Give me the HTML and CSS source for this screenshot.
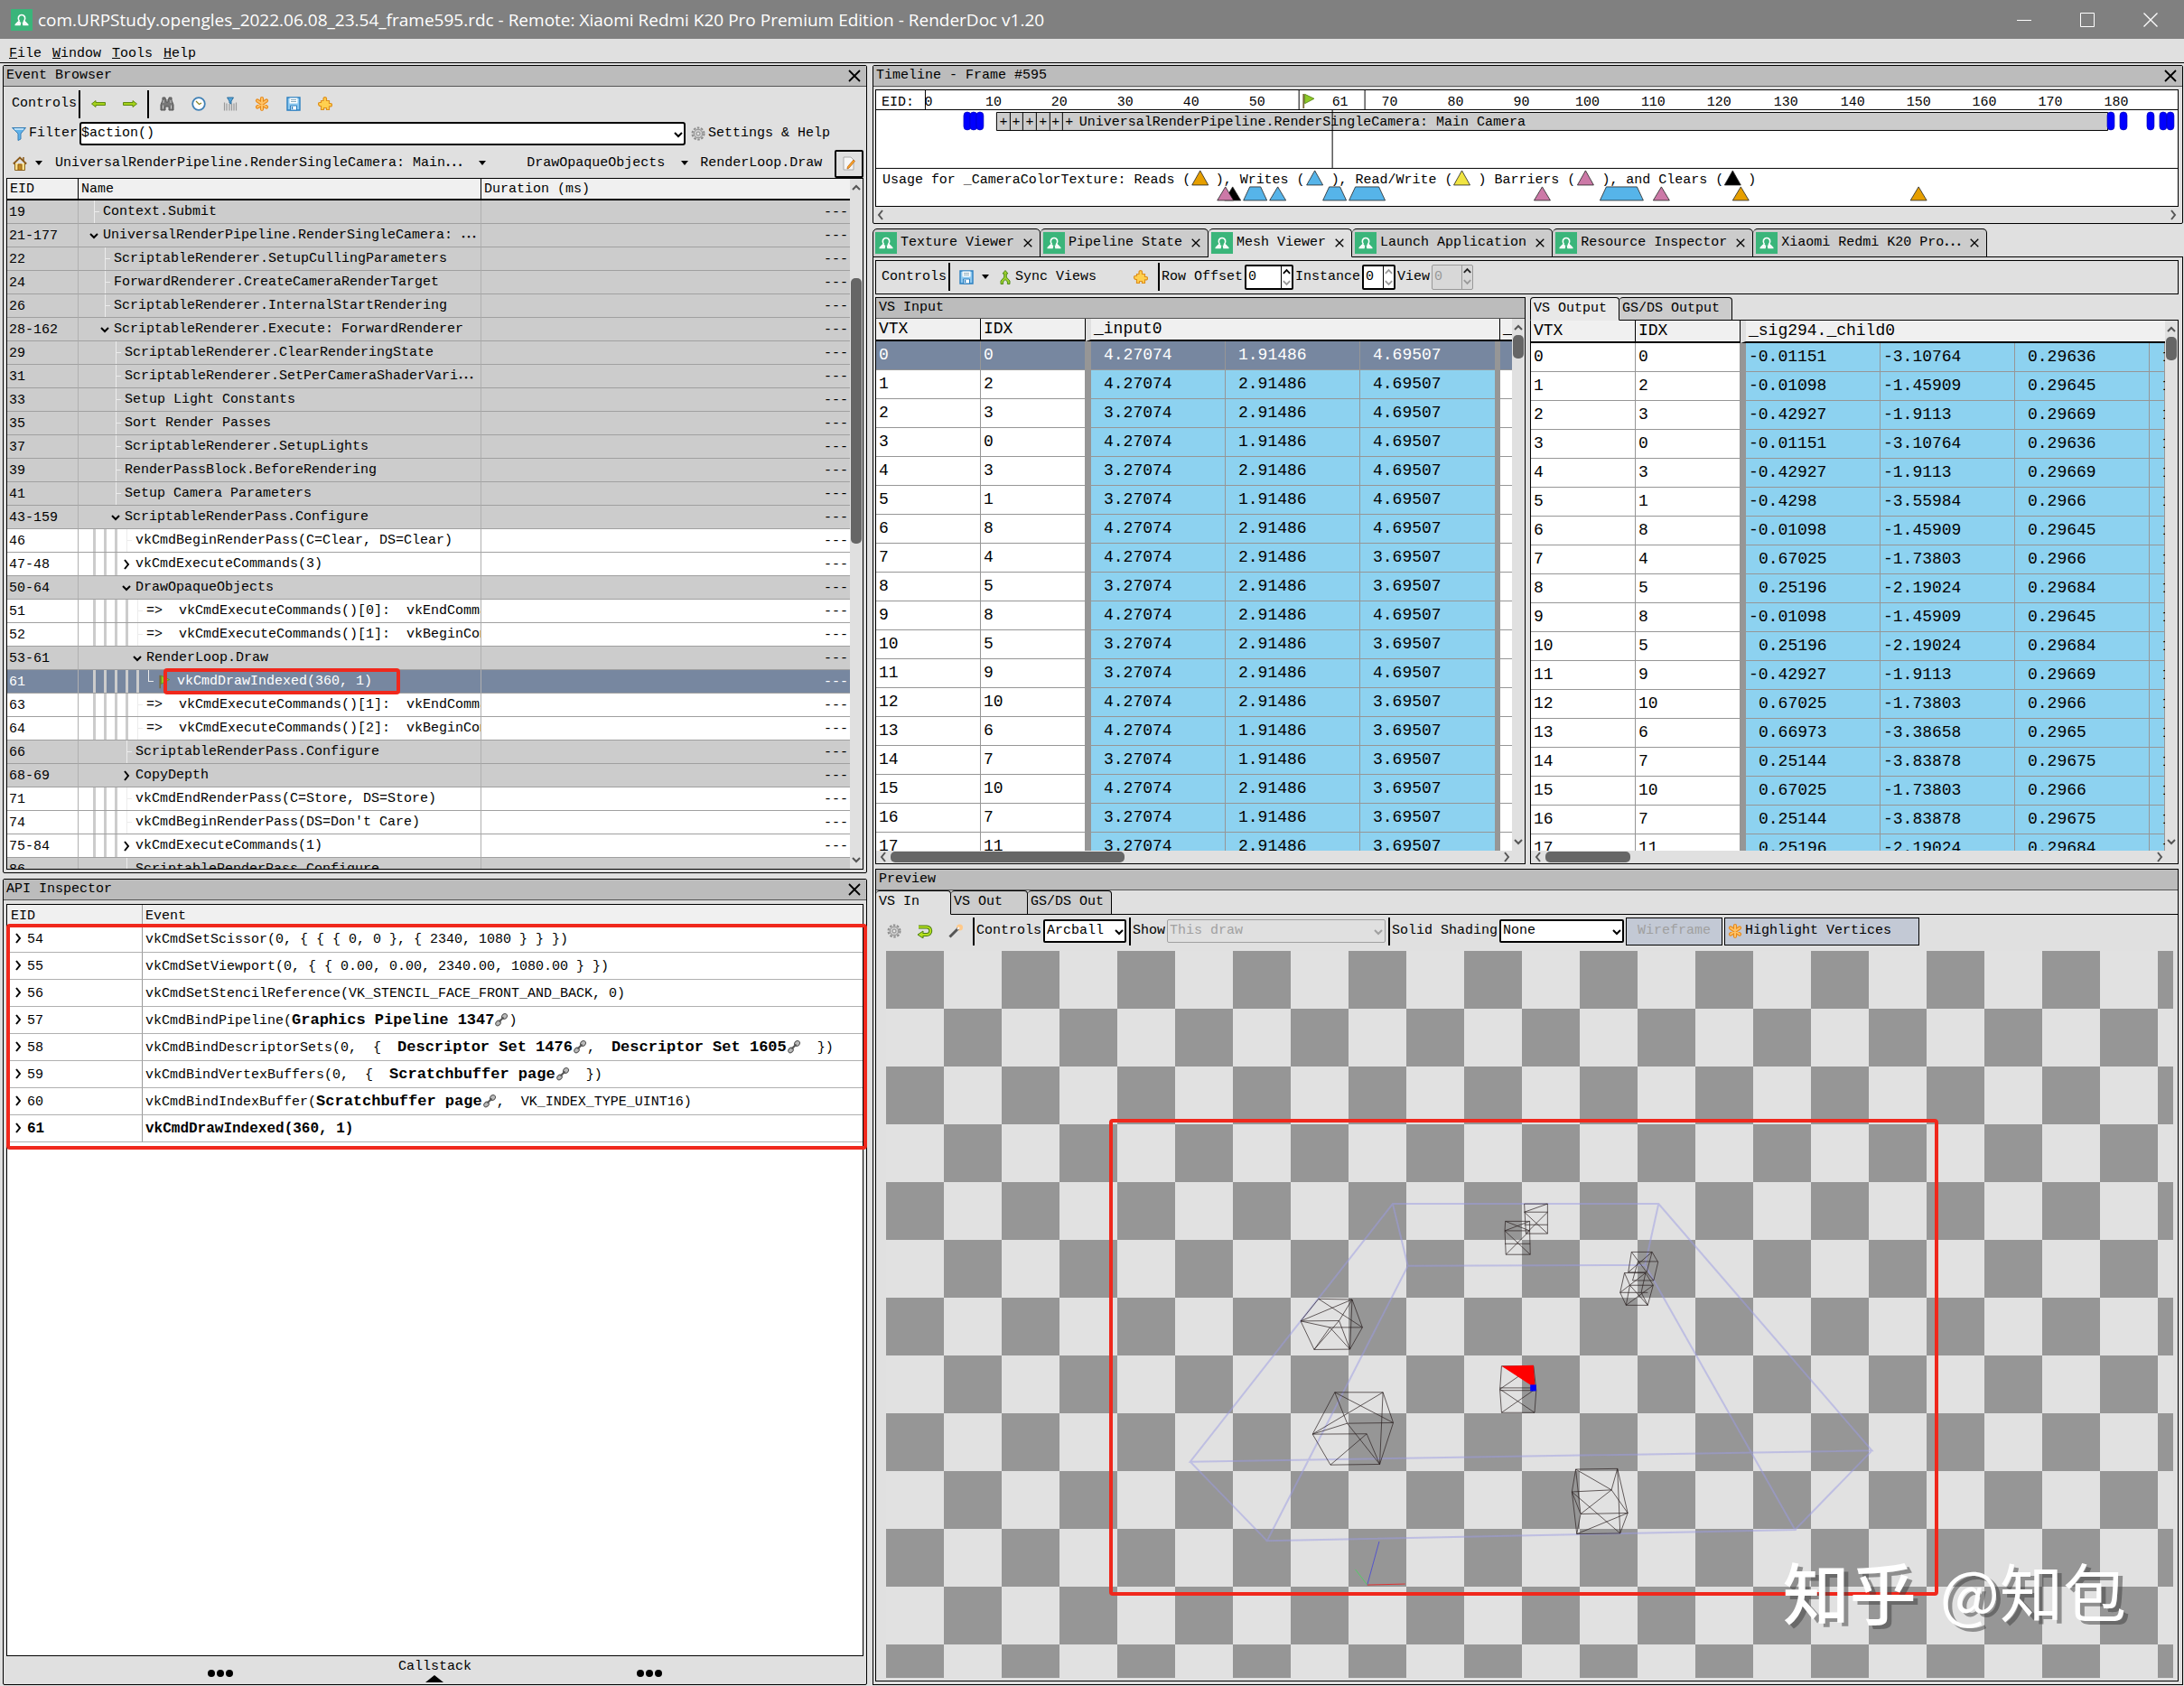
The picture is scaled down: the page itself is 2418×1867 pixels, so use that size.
FILE: index.html
```html
<!DOCTYPE html>
<html lang="en">
<head>
<meta charset="utf-8">
<title>RenderDoc v1.20</title>
<link rel="stylesheet" href="styles.css">
</head>
<body>
<svg class="defs" aria-hidden="true">
  <symbol id="logo" viewBox="0 0 24 24"><rect width="24" height="24" fill="#3ab57a"/><path d="M9.500 13.500C7 10.500 8.500 6.500 12 6.500s5 4 2.500 7l1.500 3.500M9.500 13.500L8 17M4.500 17.500H10l.5-3M19.500 17.500H14l-.5-3M5.500 17l3.500-3.500M18.500 17L15 13.500" fill="none" stroke="#fff" stroke-width="1.600"/></symbol>
  <symbol id="x" viewBox="0 0 14 14"><path d="M1 1l12 12M13 1L1 13" stroke="currentColor" stroke-width="1.800" fill="none"/></symbol>
  <symbol id="down" viewBox="0 0 12 12"><path d="M2 4l4 4 4-4" stroke="currentColor" stroke-width="2" fill="none"/></symbol>
  <symbol id="up" viewBox="0 0 12 12"><path d="M2 8l4-4 4 4" stroke="currentColor" stroke-width="2" fill="none"/></symbol>
  <symbol id="right" viewBox="0 0 12 12"><path d="M4 1l4 5-4 5" stroke="currentColor" stroke-width="2" fill="none"/></symbol>
  <symbol id="left" viewBox="0 0 12 12"><path d="M8 1L4 6l4 5" stroke="currentColor" stroke-width="2" fill="none"/></symbol>
  <symbol id="tri" viewBox="0 0 8 6"><path d="M0 0h8L4 5z"/></symbol>
  <symbol id="back" viewBox="0 0 16 16"><path d="M0.500 8L5 4.500V6.500h10.500v3H5v2z" fill="#a5d11a" stroke="#5f8a10"/></symbol>
  <symbol id="fwd" viewBox="0 0 16 16"><path d="M15.500 8L11 4.500V6.500H.5v3H11v2z" fill="#a5d11a" stroke="#5f8a10"/></symbol>
  <symbol id="find" viewBox="0 0 16 16"><path d="M3 1h3v2h1v3h2V3h1V1h3v3l2 5v6h-5v-4H6v4H1V9l2-5z" fill="#777" stroke="#555"/><path d="M4 4v3M12 4v3M3.500 9.500v4M12.500 9.500v4" stroke="#ccc"/></symbol>
  <symbol id="clock" viewBox="0 0 16 16"><circle cx="8" cy="8" r="6.800" fill="#fff" stroke="#3f80b5" stroke-width="1.800"/><path d="M5 5l3.500 3.500L11 7" fill="none" stroke="#8a8420" stroke-width="1.200"/></symbol>
  <symbol id="chart" viewBox="0 0 16 16"><path d="M1.500 6.500v9M4 7.500v8M7 8v7.500M9.500 8v7.500M12 7.500v8M14.500 6.500v9" stroke="#999" stroke-width="1.200"/><path d="M4.500 1h7L9 5v3L7 7V5z" fill="#52a5da" stroke="#2f6f9e"/></symbol>
  <symbol id="star" viewBox="0 0 16 16"><path d="M8 2.200v11.600M3 4.500l10 7M13 4.500l-10 7" stroke="#e88a1a" stroke-width="4.200" stroke-linecap="round"/><path d="M8 2v12M3 4.500l10 7M13 4.500L3 11.500" stroke="#ffc266" stroke-width="2" stroke-linecap="round"/></symbol>
  <symbol id="save" viewBox="0 0 16 16"><path d="M1 1h14v14H1z" fill="#8ec9f0" stroke="#2a7fc0" stroke-width="1.400"/><path d="M3.500 1.500h9v6h-9z" fill="#fff"/><path d="M5 3.500h6M5 5.500h6" stroke="#8ab"/><path d="M4.500 10h7v5h-7z" fill="#fff" stroke="#2a7fc0"/><path d="M6.500 11v3" stroke="#2a7fc0" stroke-width="1.500"/></symbol>
  <symbol id="puzzle" viewBox="0 0 16 16"><path d="M3.500 4.500H6V2.500q0-1.800 1.800-1.800T9.500 2.500v2h3v3h1.200q1.800 0 1.800 1.700t-1.800 1.600h-1.200v3.700h-3v-2H6.500v2h-3v-4H2Q.5 9.500.5 8T2 6.500h1.500z" fill="#ffd04f" stroke="#de8f1c" stroke-width="1.200"/></symbol>
  <symbol id="funnel" viewBox="0 0 16 16"><path d="M.5 1.500h15L10 8v6l-3 1.500V8z" fill="#5fb2ea" stroke="#3a7fb5"/><path d="M3 3h10" stroke="#d5ecfb" stroke-width="1.500"/></symbol>
  <symbol id="gear" viewBox="0 0 16 16"><circle cx="8" cy="8" r="6.500" fill="none" stroke="#8c8c8c" stroke-width="2" stroke-dasharray="2.500 1.600"/><circle cx="8" cy="8" r="4.800" fill="#ccc" stroke="#8c8c8c"/><circle cx="8" cy="8" r="2" fill="#e8e8e8" stroke="#8c8c8c"/></symbol>
  <symbol id="home" viewBox="0 0 16 16"><path d="M2.500 8v7.500h11V8" fill="#ffe08a" stroke="#8a6420"/><path d="M.8 8.500L8 1.500l7.200 7" fill="none" stroke="#8a5a18" stroke-width="1.800"/><path d="M6 9h4v6.500H6z" fill="#c58a20" stroke="#8a5a18"/><path d="M12 1v4" stroke="#8a5a18" stroke-width="1.500"/></symbol>
  <symbol id="edit" viewBox="0 0 16 16"><path d="M2 1h8l3 3v11H2z" fill="#f6f6f6" stroke="#aaa"/><path d="M14.500 5.500L8 13l-2 1 .5-2.500L13 4z" fill="#ffa524" stroke="#b5651a" stroke-width=".8"/></symbol>
  <symbol id="sync" viewBox="0 0 16 16"><path d="M8 .5l3 3.500H9.300v4l3.700 4v3.500h-2.600V13L8 10.500 5.600 13v2.500H3V12l3.700-4V4H5z" fill="#9bd02c" stroke="#4f8a18"/></symbol>
  <symbol id="undo" viewBox="0 0 18 16"><path d="M2 3.500h9a4 4 0 0 1 0 8.500H6" fill="none" stroke="#4b7d12" stroke-width="4"/><path d="M1 12l6-4v8z" fill="#b5e01f" stroke="#4b7d12"/><path d="M2 3.500h9a4 4 0 0 1 0 8.500H5" fill="none" stroke="#b5e01f" stroke-width="2"/></symbol>
  <symbol id="wand" viewBox="0 0 16 16"><circle cx="12.500" cy="4" r="3.500" fill="#ffc98a"/><path d="M1.500 14.500L11 5" stroke="#555" stroke-width="3"/><path d="M10 6l2-2" stroke="#f5f5f5" stroke-width="2"/></symbol>
  <symbol id="flag" viewBox="0 0 16 20"><path d="M2 1v18" stroke="#7a6a3a" stroke-width="2"/><path d="M3.500 1.500L15 7 3.500 13z" fill="#8ec926" stroke="#5b8a1a"/></symbol>
  <symbol id="link" viewBox="0 0 16 16"><g fill="#bbb" stroke="#555"><ellipse cx="4.500" cy="12" rx="3" ry="2.400" transform="rotate(-45 4.500 12)"/><ellipse cx="11.500" cy="4.500" rx="3.200" ry="2.600" transform="rotate(-45 11.500 4.500)"/></g><path d="M5.500 10.500l5-5" stroke="#555" stroke-width="2.200"/></symbol>
</svg>

<header class="titlebar">
  <svg class="applogo"><use href="#logo"/></svg>
  <h1>com.URPStudy.opengles_2022.06.08_23.54_frame595.rdc - Remote: Xiaomi Redmi K20 Pro Premium Edition - RenderDoc v1.20</h1>
  <div class="winbtns">
    <button aria-label="Minimize"><svg viewBox="0 0 16 16"><path d="M0 8.500h16" stroke="#fff"/></svg></button>
    <button aria-label="Maximize"><svg viewBox="0 0 16 16"><path d="M.5 .5h15v15H.5z" fill="none" stroke="#fff"/></svg></button>
    <button aria-label="Close"><svg viewBox="0 0 16 16"><path d="M.5 .5l15 15M15.500 .5l-15 15" stroke="#fff" stroke-width="1.300"/></svg></button>
  </div>
</header>
<nav class="menubar"><a href="#"><u>F</u>ile</a><a href="#"><u>W</u>indow</a><a href="#"><u>T</u>ools</a><a href="#"><u>H</u>elp</a></nav>

<main class="workspace">
<div class="column">

<section class="dock events">
  <div class="dockhead"><h2>Event Browser</h2><button aria-label="Close"><svg><use href="#x"/></svg></button></div>
  <div class="bar controls">
    <span>Controls</span><i class="sep"></i>
    <button class="tool" aria-label="Back"><svg><use href="#back"/></svg></button>
    <button class="tool" aria-label="Forward"><svg><use href="#fwd"/></svg></button><i class="sep"></i>
    <button class="tool" aria-label="Find"><svg><use href="#find"/></svg></button>
    <button class="tool" aria-label="Time"><svg><use href="#clock"/></svg></button>
    <button class="tool" aria-label="Columns"><svg><use href="#chart"/></svg></button>
    <button class="tool" aria-label="Bookmark"><svg><use href="#star"/></svg></button>
    <button class="tool" aria-label="Export"><svg><use href="#save"/></svg></button>
    <button class="tool" aria-label="Extensions"><svg><use href="#puzzle"/></svg></button>
  </div>
  <div class="bar filter">
    <svg><use href="#funnel"/></svg><label for="filter">Filter</label>
    <div class="combo"><input id="filter" value="$action()"><svg><use href="#down"/></svg></div>
    <button class="settings"><svg><use href="#gear"/></svg>Settings &amp; Help</button>
  </div>
  <div class="bar crumbs">
    <svg class="home"><use href="#home"/></svg><svg class="tri"><use href="#tri"/></svg>
    <button>UniversalRenderPipeline.RenderSingleCamera: Main<span class="dots">⋯</span></button><svg class="tri"><use href="#tri"/></svg>
    <button class="opaque">DrawOpaqueObjects</button><svg class="tri"><use href="#tri"/></svg>
    <button>RenderLoop.Draw</button>
    <button class="editbtn" aria-label="Edit"><svg><use href="#edit"/></svg></button>
  </div>
  <div class="list">
    <div class="clip">
    <table class="tree">
      <colgroup><col class="c-eid"><col class="c-name"><col></colgroup>
      <thead><tr><th>EID</th><th>Name</th><th>Duration (ms)</th></tr></thead>
      <tbody>
      <tr class="g"><td>19</td><td><div><i class="t"></i>Context.Submit</div></td><td>---</td></tr>
      <tr class="g"><td>21-177</td><td><div><svg><use href="#down"/></svg>UniversalRenderPipeline.RenderSingleCamera: <span class="dots">⋯</span></div></td><td>---</td></tr>
      <tr class="g"><td>22</td><td><div><i></i><i class="t"></i>ScriptableRenderer.SetupCullingParameters</div></td><td>---</td></tr>
      <tr class="g"><td>24</td><td><div><i></i><i class="t"></i>ForwardRenderer.CreateCameraRenderTarget</div></td><td>---</td></tr>
      <tr class="g"><td>26</td><td><div><i></i><i class="t"></i>ScriptableRenderer.InternalStartRendering</div></td><td>---</td></tr>
      <tr class="g"><td>28-162</td><td><div><i></i><svg><use href="#down"/></svg>ScriptableRenderer.Execute: ForwardRenderer</div></td><td>---</td></tr>
      <tr class="g"><td>29</td><td><div><i></i><i></i><i class="t"></i>ScriptableRenderer.ClearRenderingState</div></td><td>---</td></tr>
      <tr class="g"><td>31</td><td><div><i></i><i></i><i class="t"></i>ScriptableRenderer.SetPerCameraShaderVari<span class="dots">⋯</span></div></td><td>---</td></tr>
      <tr class="g"><td>33</td><td><div><i></i><i></i><i class="t"></i>Setup Light Constants</div></td><td>---</td></tr>
      <tr class="g"><td>35</td><td><div><i></i><i></i><i class="t"></i>Sort Render Passes</div></td><td>---</td></tr>
      <tr class="g"><td>37</td><td><div><i></i><i></i><i class="t"></i>ScriptableRenderer.SetupLights</div></td><td>---</td></tr>
      <tr class="g"><td>39</td><td><div><i></i><i></i><i class="t"></i>RenderPassBlock.BeforeRendering</div></td><td>---</td></tr>
      <tr class="g"><td>41</td><td><div><i></i><i></i><i class="t"></i>Setup Camera Parameters</div></td><td>---</td></tr>
      <tr class="g"><td>43-159</td><td><div><i></i><i></i><svg><use href="#down"/></svg>ScriptableRenderPass.Configure</div></td><td>---</td></tr>
      <tr><td>46</td><td><div><i></i><i></i><i></i><i class="t"></i>vkCmdBeginRenderPass(C=Clear, DS=Clear)</div></td><td>---</td></tr>
      <tr><td>47-48</td><td><div><i></i><i></i><i></i><svg><use href="#right"/></svg>vkCmdExecuteCommands(3)</div></td><td>---</td></tr>
      <tr class="g"><td>50-64</td><td><div><i></i><i></i><i></i><svg><use href="#down"/></svg>DrawOpaqueObjects</div></td><td>---</td></tr>
      <tr><td>51</td><td><div><i></i><i></i><i></i><i></i><i class="t"></i>=&gt;  vkCmdExecuteCommands()[0]:  vkEndCommandBuffer</div></td><td>---</td></tr>
      <tr><td>52</td><td><div><i></i><i></i><i></i><i></i><i class="t"></i>=&gt;  vkCmdExecuteCommands()[1]:  vkBeginCommandBuffer</div></td><td>---</td></tr>
      <tr class="g"><td>53-61</td><td><div><i></i><i></i><i></i><i></i><svg><use href="#down"/></svg>RenderLoop.Draw</div></td><td>---</td></tr>
      <tr class="current"><td>61</td><td><div><i></i><i></i><i></i><i></i><i></i><i class="t end"></i><svg class="flag"><use href="#flag"/></svg>vkCmdDrawIndexed(360, 1)<b class="mark"></b></div></td><td>---</td></tr>
      <tr><td>63</td><td><div><i></i><i></i><i></i><i></i><i class="t"></i>=&gt;  vkCmdExecuteCommands()[1]:  vkEndCommandBuffer</div></td><td>---</td></tr>
      <tr><td>64</td><td><div><i></i><i></i><i></i><i></i><i class="t"></i>=&gt;  vkCmdExecuteCommands()[2]:  vkBeginCommandBuffer</div></td><td>---</td></tr>
      <tr class="g"><td>66</td><td><div><i></i><i></i><i></i><i class="t"></i>ScriptableRenderPass.Configure</div></td><td>---</td></tr>
      <tr class="g"><td>68-69</td><td><div><i></i><i></i><i></i><svg><use href="#right"/></svg>CopyDepth</div></td><td>---</td></tr>
      <tr><td>71</td><td><div><i></i><i></i><i></i><i class="t"></i>vkCmdEndRenderPass(C=Store, DS=Store)</div></td><td>---</td></tr>
      <tr><td>74</td><td><div><i></i><i></i><i></i><i class="t"></i>vkCmdBeginRenderPass(DS=Don't Care)</div></td><td>---</td></tr>
      <tr><td>75-84</td><td><div><i></i><i></i><i></i><svg><use href="#right"/></svg>vkCmdExecuteCommands(1)</div></td><td>---</td></tr>
      <tr class="g"><td>86</td><td><div><i></i><i></i><i></i><i class="t"></i>ScriptableRenderPass.Configure</div></td><td>---</td></tr>
      </tbody>
    </table>
    </div>
    <div class="vscroll"><svg><use href="#up"/></svg><b class="ev"></b><svg><use href="#down"/></svg></div>
  </div>
</section>

<section class="dock api">
  <div class="dockhead"><h2>API Inspector</h2><button aria-label="Close"><svg><use href="#x"/></svg></button></div>
  <div class="apilist">
    <table>
      <colgroup><col class="c-api"><col></colgroup>
      <thead><tr><th>EID</th><th>Event</th></tr></thead>
      <tbody>
      <tr><td><svg><use href="#right"/></svg>54</td><td>vkCmdSetScissor(0, { { { 0, 0 }, { 2340, 1080 } } })</td></tr>
      <tr><td><svg><use href="#right"/></svg>55</td><td>vkCmdSetViewport(0, { { 0.00, 0.00, 2340.00, 1080.00 } })</td></tr>
      <tr><td><svg><use href="#right"/></svg>56</td><td>vkCmdSetStencilReference(VK_STENCIL_FACE_FRONT_AND_BACK, 0)</td></tr>
      <tr><td><svg><use href="#right"/></svg>57</td><td>vkCmdBindPipeline(<strong>Graphics Pipeline 1347</strong><svg><use href="#link"/></svg>)</td></tr>
      <tr><td><svg><use href="#right"/></svg>58</td><td>vkCmdBindDescriptorSets(0,  {  <strong>Descriptor Set 1476</strong><svg><use href="#link"/></svg>,  <strong>Descriptor Set 1605</strong><svg><use href="#link"/></svg>  })</td></tr>
      <tr><td><svg><use href="#right"/></svg>59</td><td>vkCmdBindVertexBuffers(0,  {  <strong>Scratchbuffer page</strong><svg><use href="#link"/></svg>  })</td></tr>
      <tr><td><svg><use href="#right"/></svg>60</td><td>vkCmdBindIndexBuffer(<strong>Scratchbuffer page</strong><svg><use href="#link"/></svg>,  VK_INDEX_TYPE_UINT16)</td></tr>
      <tr class="last"><td><svg><use href="#right"/></svg><strong>61</strong></td><td><strong>vkCmdDrawIndexed(360, 1)</strong></td></tr>
      </tbody>
    </table>
    <b class="mark"></b>
  </div>
  <div class="callstack"><span class="grip"><i></i><i></i><i></i></span><button>Callstack<svg viewBox="0 0 20 8"><path d="M10 0l10 8H0z"/></svg></button><span class="grip"><i></i><i></i><i></i></span></div>
</section>
</div>

<div class="column right">
<section class="dock timeline">
  <div class="dockhead"><h2>Timeline - Frame #595</h2><button aria-label="Close"><svg><use href="#x"/></svg></button></div>
  <svg class="track" viewBox="0 0 1442 128" preserveAspectRatio="xMinYMin meet">
    <path d="M54.500 0v21M468.500 0v21M541.500 0v21M0 21.500h1442M0 86.500h1442" stroke="#000" fill="none"/>
    <g class="mid"><text x="58" y="17">0</text><text x="130" y="17">10</text><text x="203" y="17">20</text><text x="276" y="17">30</text><text x="349" y="17">40</text><text x="422" y="17">50</text><text x="514" y="17">61</text><text x="569" y="17">70</text><text x="642" y="17">80</text><text x="715" y="17">90</text><text x="788" y="17">100</text><text x="861" y="17">110</text><text x="934" y="17">120</text><text x="1008" y="17">130</text><text x="1082" y="17">140</text><text x="1155" y="17">150</text><text x="1228" y="17">160</text><text x="1301" y="17">170</text><text x="1374" y="17">180</text></g>
    <text x="6" y="17">EID:</text>
    <use href="#flag" x="470" y="3" width="18" height="18"/>
    <path d="M133.500 24.500h1231v20h-1231z" fill="#ccc" stroke="#000"/>
    <path d="M148.500 24v20M162.500 24v20M177.500 24v20M192.500 24v20M206.500 24v20" stroke="#000"/>
    <g class="mid"><text x="141" y="39">+</text><text x="155" y="39">+</text><text x="170" y="39">+</text><text x="185" y="39">+</text><text x="199" y="39">+</text><text x="214" y="39">+</text></g>
    <text x="225" y="39">UniversalRenderPipeline.RenderSingleCamera: Main Camera</text>
    <path d="M505.500 21v65" stroke="#000"/>
    <g fill="#00f" stroke="#00a" stroke-width=".6"><rect x="97" y="24" width="8" height="20" rx="4"/><rect x="104" y="24" width="8" height="20" rx="4"/><rect x="111" y="24" width="8" height="20" rx="4"/><rect x="1364" y="24" width="8" height="20" rx="4"/><rect x="1378" y="24" width="8" height="20" rx="4"/><rect x="1408" y="24" width="8" height="20" rx="4"/><rect x="1422" y="24" width="8" height="20" rx="4"/><rect x="1430" y="24" width="8" height="20" rx="4"/></g>
    <text x="7" y="103">Usage for _CameraColorTexture: Reads (</text><text x="376" y="103">), Writes (</text><text x="504" y="103">), Read/Write (</text><text x="667" y="103">) Barriers (</text><text x="804" y="103">), and Clears (</text><text x="966" y="103">)</text>
    <g stroke="#222" stroke-width=".8">
      <path d="M350 105l9-16 9 16zM949 122l9-15 9 15zM1146 122l9-15 9 15z" fill="#e69f00"/>
      <path d="M477 105l9-16 9 16zM407 122l7-15h12l7 15zM436 122l9-15 9 15zM495 122l7-15h12l7 15zM524 122l7-15h26l7 15zM802 122l7-15h34l7 15z" fill="#56b4e9"/>
      <path d="M640 105l9-16 9 16z" fill="#f0e442"/>
      <path d="M940 105l9-16 9 16zM386 122l9-15 9 15z" fill="#000"/>
      <path d="M777 105l9-16 9 16zM378 122l9-15 9 15zM729 122l9-15 9 15zM861 122l9-15 9 15z" fill="#cc79a7"/>
    </g>
  </svg>
  <div class="tscroll"><svg><use href="#left"/></svg><svg><use href="#right"/></svg></div>
</section>

<div class="mesh">
  <div class="tabs">
    <div class="tab"><svg class="logo"><use href="#logo"/></svg><button>Texture Viewer</button><button aria-label="Close"><svg><use href="#x"/></svg></button></div>
    <div class="tab"><svg class="logo"><use href="#logo"/></svg><button>Pipeline State</button><button aria-label="Close"><svg><use href="#x"/></svg></button></div>
    <div class="tab on"><svg class="logo"><use href="#logo"/></svg><button>Mesh Viewer</button><button aria-label="Close"><svg><use href="#x"/></svg></button></div>
    <div class="tab"><svg class="logo"><use href="#logo"/></svg><button>Launch Application</button><button aria-label="Close"><svg><use href="#x"/></svg></button></div>
    <div class="tab"><svg class="logo"><use href="#logo"/></svg><button>Resource Inspector</button><button aria-label="Close"><svg><use href="#x"/></svg></button></div>
    <div class="tab"><svg class="logo"><use href="#logo"/></svg><button>Xiaomi Redmi K20 Pro<span class="dots">⋯</span></button><button aria-label="Close"><svg><use href="#x"/></svg></button></div>
  </div>
  <div class="meshbody">
    <div class="bar meshbar">
      <span>Controls</span><i class="sep"></i>
      <button class="savebtn" aria-label="Export"><svg><use href="#save"/></svg><svg class="tri"><use href="#tri"/></svg></button>
      <button class="syncbtn"><svg><use href="#sync"/></svg>Sync Views</button>
      <button class="tool" aria-label="Extensions"><svg><use href="#puzzle"/></svg></button><i class="sep"></i>
      <label for="row">Row Offset</label><span class="spin wide"><input id="row" type="number" value="0"><span><svg><use href="#up"/></svg><svg class="dim"><use href="#down"/></svg></span></span>
      <label for="inst">Instance</label><span class="spin"><input id="inst" type="number" value="0"><span><svg class="dim"><use href="#up"/></svg><svg class="dim"><use href="#down"/></svg></span></span>
      <label for="view">View</label><span class="spin mid off"><input id="view" type="number" value="0" disabled><span><svg class="blk"><use href="#up"/></svg><svg><use href="#down"/></svg></span></span>
    </div>
    <div class="buffers">
      <section class="buffer">
        <div class="dockhead"><h2>VS Input</h2></div>
        <div class="grid">
          <div class="clip"><table class="data in">
            <colgroup><col class="k"><col class="k"><col class="w"><col class="n"><col class="w"><col></colgroup>
            <thead><tr><th>VTX</th><th>IDX</th><th colspan="3">_input0</th><th>_</th></tr></thead>
            <tbody>
            <tr class="current"><td>0</td><td>0</td><td>4.27074</td><td>1.91486</td><td>4.69507</td><td></td></tr>
            <tr><td>1</td><td>2</td><td>4.27074</td><td>2.91486</td><td>4.69507</td><td></td></tr>
            <tr><td>2</td><td>3</td><td>3.27074</td><td>2.91486</td><td>4.69507</td><td></td></tr>
            <tr><td>3</td><td>0</td><td>4.27074</td><td>1.91486</td><td>4.69507</td><td></td></tr>
            <tr><td>4</td><td>3</td><td>3.27074</td><td>2.91486</td><td>4.69507</td><td></td></tr>
            <tr><td>5</td><td>1</td><td>3.27074</td><td>1.91486</td><td>4.69507</td><td></td></tr>
            <tr><td>6</td><td>8</td><td>4.27074</td><td>2.91486</td><td>4.69507</td><td></td></tr>
            <tr><td>7</td><td>4</td><td>4.27074</td><td>2.91486</td><td>3.69507</td><td></td></tr>
            <tr><td>8</td><td>5</td><td>3.27074</td><td>2.91486</td><td>3.69507</td><td></td></tr>
            <tr><td>9</td><td>8</td><td>4.27074</td><td>2.91486</td><td>4.69507</td><td></td></tr>
            <tr><td>10</td><td>5</td><td>3.27074</td><td>2.91486</td><td>3.69507</td><td></td></tr>
            <tr><td>11</td><td>9</td><td>3.27074</td><td>2.91486</td><td>4.69507</td><td></td></tr>
            <tr><td>12</td><td>10</td><td>4.27074</td><td>2.91486</td><td>3.69507</td><td></td></tr>
            <tr><td>13</td><td>6</td><td>4.27074</td><td>1.91486</td><td>3.69507</td><td></td></tr>
            <tr><td>14</td><td>7</td><td>3.27074</td><td>1.91486</td><td>3.69507</td><td></td></tr>
            <tr><td>15</td><td>10</td><td>4.27074</td><td>2.91486</td><td>3.69507</td><td></td></tr>
            <tr><td>16</td><td>7</td><td>3.27074</td><td>1.91486</td><td>3.69507</td><td></td></tr>
            <tr><td>17</td><td>11</td><td>3.27074</td><td>2.91486</td><td>3.69507</td><td></td></tr>
            </tbody>
          </table></div>
          <div class="vscroll"><svg><use href="#up"/></svg><b></b><svg><use href="#down"/></svg></div>
          <div class="hscroll"><svg><use href="#left"/></svg><b class="hin"></b><svg><use href="#right"/></svg></div>
        </div>
      </section>
      <section class="buffer out">
        <div class="subtabs"><button class="on">VS Output</button><button>GS/DS Output</button></div>
        <div class="grid">
          <div class="clip"><table class="data">
            <colgroup><col class="k"><col class="k"><col class="w"><col class="n"><col class="n"><col></colgroup>
            <thead><tr><th>VTX</th><th>IDX</th><th colspan="4">_sig294._child0</th></tr></thead>
            <tbody>
            <tr><td>0</td><td>0</td><td class="m">-0.01151</td><td class="m">-3.10764</td><td>0.29636</td><td>1</td></tr>
            <tr><td>1</td><td>2</td><td class="m">-0.01098</td><td class="m">-1.45909</td><td>0.29645</td><td>1</td></tr>
            <tr><td>2</td><td>3</td><td class="m">-0.42927</td><td class="m">-1.9113</td><td>0.29669</td><td>1</td></tr>
            <tr><td>3</td><td>0</td><td class="m">-0.01151</td><td class="m">-3.10764</td><td>0.29636</td><td>1</td></tr>
            <tr><td>4</td><td>3</td><td class="m">-0.42927</td><td class="m">-1.9113</td><td>0.29669</td><td>1</td></tr>
            <tr><td>5</td><td>1</td><td class="m">-0.4298</td><td class="m">-3.55984</td><td>0.2966</td><td>1</td></tr>
            <tr><td>6</td><td>8</td><td class="m">-0.01098</td><td class="m">-1.45909</td><td>0.29645</td><td>1</td></tr>
            <tr><td>7</td><td>4</td><td>0.67025</td><td class="m">-1.73803</td><td>0.2966</td><td>1</td></tr>
            <tr><td>8</td><td>5</td><td>0.25196</td><td class="m">-2.19024</td><td>0.29684</td><td>1</td></tr>
            <tr><td>9</td><td>8</td><td class="m">-0.01098</td><td class="m">-1.45909</td><td>0.29645</td><td>1</td></tr>
            <tr><td>10</td><td>5</td><td>0.25196</td><td class="m">-2.19024</td><td>0.29684</td><td>1</td></tr>
            <tr><td>11</td><td>9</td><td class="m">-0.42927</td><td class="m">-1.9113</td><td>0.29669</td><td>1</td></tr>
            <tr><td>12</td><td>10</td><td>0.67025</td><td class="m">-1.73803</td><td>0.2966</td><td>1</td></tr>
            <tr><td>13</td><td>6</td><td>0.66973</td><td class="m">-3.38658</td><td>0.2965</td><td>1</td></tr>
            <tr><td>14</td><td>7</td><td>0.25144</td><td class="m">-3.83878</td><td>0.29675</td><td>1</td></tr>
            <tr><td>15</td><td>10</td><td>0.67025</td><td class="m">-1.73803</td><td>0.2966</td><td>1</td></tr>
            <tr><td>16</td><td>7</td><td>0.25144</td><td class="m">-3.83878</td><td>0.29675</td><td>1</td></tr>
            <tr><td>17</td><td>11</td><td>0.25196</td><td class="m">-2.19024</td><td>0.29684</td><td>1</td></tr>
            </tbody>
          </table></div>
          <div class="vscroll"><svg><use href="#up"/></svg><b></b><svg><use href="#down"/></svg></div>
          <div class="hscroll"><svg><use href="#left"/></svg><b class="hout"></b><svg><use href="#right"/></svg></div>
        </div>
      </section>
    </div>
    <section class="preview">
      <div class="dockhead"><h2>Preview</h2></div>
      <div class="subtabs"><button class="on">VS In</button><button>VS Out</button><button>GS/DS Out</button></div>
      <div class="bar viewbar">
        <button class="tool" aria-label="Options"><svg><use href="#gear"/></svg></button>
        <button class="tool" aria-label="Reset"><svg class="u"><use href="#undo"/></svg></button>
        <button class="tool" aria-label="Auto-fit"><svg><use href="#wand"/></svg></button><i class="sep"></i>
        <label for="cam">Controls</label><span class="drop arc"><select id="cam"><option>Arcball</option></select><svg><use href="#down"/></svg></span><i class="sep"></i>
        <label for="show">Show</label><span class="drop show off"><select id="show" disabled><option>This draw</option></select><svg><use href="#down"/></svg></span><i class="sep"></i>
        <label for="shade">Solid Shading</label><span class="drop shade"><select id="shade"><option>None</option></select><svg><use href="#down"/></svg></span>
        <button class="push wf" disabled>Wireframe</button>
        <button class="push hv"><svg><use href="#star"/></svg>Highlight Vertices</button>
      </div>
      <div class="canvas">
        <svg class="scene">
          <g transform="translate(239 178) scale(.5995 .3508)" fill="none">
            <path class="fr" d="M537 291H1028L1422 1070L163 1105zM537 291L565 487L1003 484L1028 291M565 487L305 1355L1280 1320L1003 484M163 1105L305 1355M1280 1320L1422 1070"/>
            <path class="wire" d="M780 291H823V385H783zM780 317H823M780 357H823M780 317L823 291M780 317L823 385M823 317L783 385M745 346H790V376H744zM744 376L746 451H791L790 376M744 417H791M744 376L790 346M745 346L790 376L746 451M744 376L791 451"/>
            <path class="wire" d="M978 443H1016L1006 507H972zM1016 443L1027 475L1019 533L1006 507M978 443L1006 507M972 507L1016 443M990 473H1027M990 473L980 533H1019M965 509H1004L1018 548L1008 611H968L957 571zM957 571H1008M975 548H1018M965 509L975 548L968 611M1004 509L996 571L1008 611M957 571L1004 509M968 611L1018 548M975 548L1008 611"/>
            <path class="wire" d="M400 591L462 593L481 681L458 750L392 751L367 661zM367 661L438 660L458 750M462 593L438 660M462 593L458 750M367 661L462 593M367 661L421 681H481M421 681L392 751M400 591L481 681M421 681L458 750M438 660L392 751"/>
            <path class="wire" d="M430 886L519 886L538 982L513 1113L422 1115L389 1018zM389 1018L489 1017L513 1113M519 886L513 1113M389 1018L453 984L538 982M430 886L453 984M430 886L538 982M389 1018L519 886M453 984L513 1113M489 1017L422 1115"/>
            <path class="wire" d="M875 1129L952 1127L971 1267L957 1331L877 1333L868 1200zM868 1200L941 1194M952 1127L941 1194L971 1267M952 1127L957 1331M868 1200L884 1270L971 1267M875 1129L884 1270L877 1333M875 1129L941 1194M868 1200L957 1331M877 1333L971 1267M941 1194L884 1270"/>
            <path class="wire" d="M738 803H797L802 880L799 950H738L735 878zM735 872H800M735 880H800M735 876L797 803M738 950L800 876M735 876L799 950"/>
            <path d="M738 803L797 800L800 872z" fill="#f00"/><path d="M791 862h11v20h-11z" fill="#00f"/>
            <path class="axis" d="M490 1494L512 1357" stroke="#55c"/><path class="axis" d="M490 1494L468 1445" stroke="#5c6"/><path class="axis" d="M490 1494L560 1491" stroke="#d33"/>
          </g>
        </svg>
        <b class="mark"></b>
        <div class="stamp"><span>知乎</span><span class="who">@知包</span></div>
      </div>
    </section>
  </div>
</div>
</div>
</main>
</body>
</html>
```
FILE: styles.css
```css
* { box-sizing: border-box; }
html, body { height: 100%; }
body {
  margin: 0;
  display: flex;
  flex-direction: column;
  background: #e0e0e0;
  color: #000;
  font: 15px/18px "Liberation Mono", "Noto Sans CJK SC", monospace;
  overflow: hidden;
}
h1, h2 { margin: 0; font: inherit; }
svg { display: block; flex: none; width: 16px; height: 16px; }
.defs { position: absolute; width: 0; height: 0; }
button { padding: 0; border: 0; background: none; color: inherit; font: inherit; white-space: pre; }
input, select { font: inherit; color: inherit; }
table { width: 100%; border-collapse: separate; border-spacing: 0; table-layout: fixed; }
th { font-weight: normal; text-align: left; }
label { white-space: pre; }
.dots { font: 18px/18px "Noto Sans CJK SC", sans-serif; }
button .dots { line-height: 1px; }
.mark { position: absolute; border: 4px solid #f0281c; border-radius: 4px; pointer-events: none; }

/* window frame */
.titlebar { flex: none; display: flex; align-items: center; height: 43px; padding-left: 12px; background: #808080; color: #fff; }
.titlebar h1 { flex: 1; font: 19px/24px "Open Sans", sans-serif; white-space: nowrap; }
.applogo { width: 24px; height: 24px; margin-right: 6px; }
.winbtns { display: flex; padding-right: 2px; }
.winbtns button { width: 70px; display: flex; justify-content: center; }
.menubar { flex: none; display: flex; gap: 12px; height: 27px; padding: 8px 10px 0; border-bottom: 1px solid #000; }
.menubar a { color: inherit; text-decoration: none; }
.workspace {
  flex: 1; min-height: 0;
  display: grid; grid-template-columns: minmax(0, 957fr) minmax(0, 1451fr); gap: 6px;
  padding: 2px 1px 1px 3px;
}
.column { display: flex; flex-direction: column; gap: 6px; min-height: 0; }
.column.right { gap: 5px; }
.dock { display: flex; flex-direction: column; min-height: 0; border: 1px solid #000; border-radius: 2px; padding: 0 3px 3px; }
.dockhead {
  flex: none; display: flex; align-items: center; justify-content: space-between;
  height: 23px; padding: 0 3px; border-bottom: 1px solid #555; background: #bcbcbc;
}
.dock > .dockhead { margin: 0 -3px; padding: 0 6px 0 3px; }
.dockhead svg { width: 14px; height: 14px; }
.events { flex: 895 1 0; }
.api { flex: 893 1 0; }

/* tool bars */
.bar { flex: none; display: flex; align-items: center; white-space: pre; }
.sep { width: 2px; height: 31px; background: #000; margin: 0 2px; }
.tool { width: 35px; display: flex; justify-content: center; }
.controls { height: 36px; padding: 2px 0 0 6px; }
.filter { height: 31px; padding-left: 6px; }
.filter label { margin-left: 3px; }
.combo { position: relative; flex: 1; margin: 0 6px 0 2px; }
.combo input { display: block; width: 100%; height: 26px; border: 2px solid #000; border-radius: 3px; padding: 0; background: #fff; outline: 0; }
.combo svg { position: absolute; right: 2px; top: 8px; width: 12px; height: 12px; }
.settings { display: flex; gap: 3px; width: 191px; align-items: center; }
.crumbs { height: 34px; padding: 2px 0 0 7px; }
.crumbs .tri { margin: 0 14px 0 9px; }
.crumbs button + .tri { margin: 0 13px 0 18px; }
.crumbs .opaque { margin-left: 32px; }
svg.tri { width: 8px; height: 6px; }
.crumbs .editbtn { width: 32px; height: 31px; margin-left: auto; border: 2px solid #000; border-radius: 2px; display: flex; align-items: center; justify-content: center; }

/* event tree */
.list { flex: 1; min-height: 0; display: flex; border: 1px solid #000; }
.clip { flex: 1; min-width: 0; overflow: hidden; }
.c-eid { width: 78px; }
.c-name { width: 446px; }
.tree th { height: 24px; padding: 2px 3px 0; background: #f0f0f0; border-bottom: 2px solid #000; }
.tree th + th { border-left: 1px solid #000; }
.tree td { height: 26px; padding: 2px 2px 0; border-bottom: 1px solid #a0a0a0; background: #fff; }
.tree td + td { border-left: 1px solid #b0b0b0; }
.tree td:last-child { text-align: right; }
.tree .g td { background: #ccc; }
.tree .current td { background: #7787a0; color: #fff; }
.tree td:nth-child(2) { padding: 0 0 0 11px; }
.tree div { display: flex; align-items: center; height: 25px; line-height: 20px; white-space: pre; overflow: hidden; }
.tree .current div { position: relative; overflow: visible; }
.tree i { flex: none; width: 12px; height: 25px; background: linear-gradient(#ccc, #ccc) 5px 0 / 3px 100% no-repeat; }
.tree .g i { background: none; }
.tree i.t, .tree div > svg { margin-right: 4px; }
.tree i.t, .tree .g i.t { background: linear-gradient(#ececec, #ececec) 6px 0 / 1px 100% no-repeat, linear-gradient(#ececec, #ececec) 6px 12px / 6px 1px no-repeat; }
.tree .current i.end { background-size: 1px 50%, 6px 1px; }
.tree div > svg { width: 12px; height: 12px; }
.tree div > svg.flag { width: 16px; height: 16px; margin-right: 6px; }
.tree .mark { left: 83px; top: -2px; width: 262px; height: 29px; }

/* scroll bars */
.vscroll { width: 14px; display: flex; flex-direction: column; align-items: center; padding: 4px 0; color: #555; }
.vscroll svg, .hscroll svg, .tscroll svg { width: 12px; height: 12px; }
.vscroll b { width: 12px; height: 26px; margin: 2px 0 auto; border-radius: 5px; background: #666; }
.vscroll b.ev { height: 294px; margin-top: 94px; }
.hscroll { grid-column: 1 / 3; display: flex; align-items: center; padding: 0 14px 0 2px; color: #555; }
.hscroll b { height: 12px; margin: 0 auto 0 2px; border-radius: 5px; background: #666; }
.hin { width: 259px; }
.hout { width: 94px; }

/* API inspector */
.apilist { flex: 1; position: relative; margin-top: 4px; border: 1px solid #000; background: #fff; }
.c-api { width: 149px; }
.apilist th { height: 23px; padding: 2px 4px 0; background: #f0f0f0; }
.apilist th + th, .apilist td + td { border-left: 1px solid #999; padding-left: 3px; }
.apilist td { height: 30px; padding: 2px 0 0 6px; border-bottom: 1px solid #b0b0b0; white-space: pre; }
.apilist td svg { display: inline-block; vertical-align: -3px; }
.apilist td:first-child svg { width: 12px; height: 14px; margin-right: 4px; vertical-align: -2px; }
strong { font-size: 17px; }
.apilist .last strong { font-size: 16px; }
.apilist .mark { left: -1px; right: -5px; top: 21px; height: 250px; }
.callstack { flex: none; height: 28px; padding: 3px 40px 0; display: flex; justify-content: space-evenly; align-items: center; }
.callstack button { display: flex; flex-direction: column; align-items: center; }
.callstack svg { width: 20px; height: 8px; }
.grip { display: flex; gap: 2px; padding-top: 6px; }
.grip i { width: 8px; height: 8px; border-radius: 4px; background: #000; }

/* timeline */
.timeline { flex: none; padding: 0 4px 0 2px; }
.timeline > .dockhead { margin: 0 -4px 0 -2px; }
.track { width: 100%; height: auto; margin-top: 3px; border: 1px solid #000; background: #fff; }
.mid { text-anchor: middle; }
.tscroll { height: 18px; display: flex; justify-content: space-between; align-items: center; color: #555; }

/* mesh viewer */
.mesh { flex: 1; min-height: 0; display: flex; flex-direction: column; }
.tabs { flex: none; display: flex; height: 32px; margin-bottom: -1px; z-index: 1; }
.tab { display: flex; align-items: center; padding: 0 8px 0 3px; border: 1px solid #000; border-width: 1px 1px 1px 0; border-radius: 5px 5px 0 0; background: #ccc; }
.tab:first-child { border-left-width: 1px; padding-left: 2px; }
.tab.on { background: #e0e0e0; border-bottom-color: #e0e0e0; }
.tab .logo { width: 24px; height: 24px; margin-right: 4px; }
.tab button svg { width: 10px; height: 10px; margin: 0 0 0 6px; }
.tab button + button { width: 16px; margin-left: 4px; }
.meshbody { flex: 1; min-height: 0; display: flex; flex-direction: column; border: 1px solid #000; padding: 3px 4px 3px 2px; }
.meshbar { height: 38px; border: 1px solid #000; padding-left: 6px; margin-bottom: 3px; }
.savebtn { display: flex; align-items: center; gap: 9px; margin: 0 10px 0 8px; }
.syncbtn { display: flex; align-items: center; gap: 3px; margin-right: 31px; }
.spin { display: flex; width: 37px; height: 28px; margin: 0 2px; border: 2px solid #000; border-radius: 2px; background: #fff; }
.spin.wide { width: 54px; }
.spin.mid { width: 46px; }
.spin input { flex: 1; width: 0; padding: 0 2px; border: 0; background: none; outline: 0; appearance: textfield; -moz-appearance: textfield; }
.spin input::-webkit-inner-spin-button { display: none; }
.spin > span { width: 12px; border-left: 1px solid #000; }
.spin svg { width: 11px; height: 12px; }
.spin .dim { color: #999; }
.spin.off { border: 1px solid #999; background: #d8d8d8; color: #999; }
.spin.off > span { border-color: #999; }
.spin .blk { color: #222; }

.buffers { flex: 629 1 0; min-height: 0; display: grid; grid-template-columns: minmax(0, 720fr) minmax(0, 718fr); gap: 5px; }
.buffer { display: flex; flex-direction: column; min-height: 0; border: 1px solid #000; }
.buffer.out { border: 0; }
.buffer.out .grid { border: 1px solid #000; margin-top: -1px; }
.grid { flex: 1; min-height: 0; display: grid; grid-template: minmax(0, 1fr) 14px / minmax(0, 1fr) 14px; }
.data { font-size: 18px; line-height: 20px; }
.k { width: 116px; }
.w { width: 155px; }
.n { width: 149px; }
.data th { height: 25px; padding: 0 3px; background: #f0f0f0; border: solid #000; border-width: 0 1px 2px 0; }
.data th:nth-child(3), .data td:nth-child(3) { border-left: 6px solid #969696; }
.data th:nth-child(3) { border-left-color: #e0e0e0; }
.data th:last-child { border-right: 0; }
.data td { height: 32px; padding: 0 3px; border: solid #969696; border-width: 0 1px 1px 0; background: #fff; white-space: pre; }
.data td:nth-child(n+3) { background: #8dd2f0; padding: 0 0 0 14px; }
.data td:nth-child(n+3).m { padding-left: 3px; }
.data.in td:nth-child(5) { border-right-width: 6px; }
.data.in td:nth-child(6) { background: #fff; border-right: 0; }
.data.in .current td { background: #7787a0; color: #fff; }
.subtabs { flex: none; display: flex; height: 26px; z-index: 1; }
.subtabs button { padding: 0 13px 0 3px; border: 1px solid #000; border-left-width: 0; border-radius: 4px 4px 0 0; background: #ccc; }
.subtabs button:first-child { border-left-width: 1px; }
.subtabs button.on { background: #e8e8e8; border-bottom-color: #e8e8e8; }

/* preview */
.preview { flex: 900 1 0; min-height: 0; display: flex; flex-direction: column; margin-top: 5px; border: 1px solid #000; }
.preview .subtabs { border-bottom: 1px solid #000; height: 27px; }
.preview .subtabs button { margin-bottom: -1px; padding-right: 27px; border-bottom: 1px solid #000; }
.preview .subtabs button.on { padding-right: 34px; background: #e0e0e0; border-bottom-color: #e0e0e0; border-left: 0; }
.preview .subtabs button:last-child { padding-right: 8px; }
.viewbar { height: 36px; padding: 1px 0 0 3px; }
.viewbar .tool { width: 34px; }
.viewbar .u { width: 18px; }
.viewbar .sep { margin: 0 2px; }
.drop { position: relative; }
.drop select { display: block; width: 100%; height: 26px; margin: 0; padding: 0 2px; border: 2px solid #000; border-radius: 2px; background: #fff; appearance: none; outline: 0; }
.drop svg { position: absolute; right: 2px; top: 8px; width: 12px; height: 12px; }
.drop.off { color: #a0a0a0; }
.drop.off select { border: 1px solid #a0a0a0; background: none; opacity: 1; }
.drop.arc { width: 92px; margin: 0 1px 0 2px; }
.drop.show { width: 242px; margin: 0 1px 0 2px; }
.drop.shade { width: 138px; margin: 0 2px; }
.push { display: flex; align-items: center; justify-content: center; gap: 3px; height: 31px; border: 1px solid #000; background: #c3c9d5; }
.wf { width: 107px; color: #a0a0a0; margin-right: 2px; }
.hv { width: 216px; justify-content: flex-start; padding-left: 3px; }
.canvas {
  flex: 1; min-height: 0; position: relative; margin: 4px 5px 3px 11px; overflow: hidden;
  background: conic-gradient(#e1e1e1 0 25%, #969696 0 50%, #e1e1e1 0 75%, #969696 0) 0 0 / 128px 128px;
}
.scene { width: 100%; height: 100%; }
.scene path { vector-effect: non-scaling-stroke; }
.fr { stroke: #9c9ce4; stroke-width: 2; stroke-opacity: .5; }
.wire { stroke: #2a2020; stroke-width: 1; stroke-opacity: .7; }
.axis { stroke-width: 1; }
.canvas .mark { left: 247px; top: 186px; width: 918px; height: 528px; }
.stamp {
  position: absolute; right: 52px; bottom: 57px; display: flex; gap: 26px; align-items: center;
  color: #fff; font: 500 74px/80px "Noto Sans CJK SC", sans-serif; text-shadow: 5px 4px 0 rgba(60, 60, 60, .5);
}
.who { font-size: 70px; font-weight: 400; }
```
